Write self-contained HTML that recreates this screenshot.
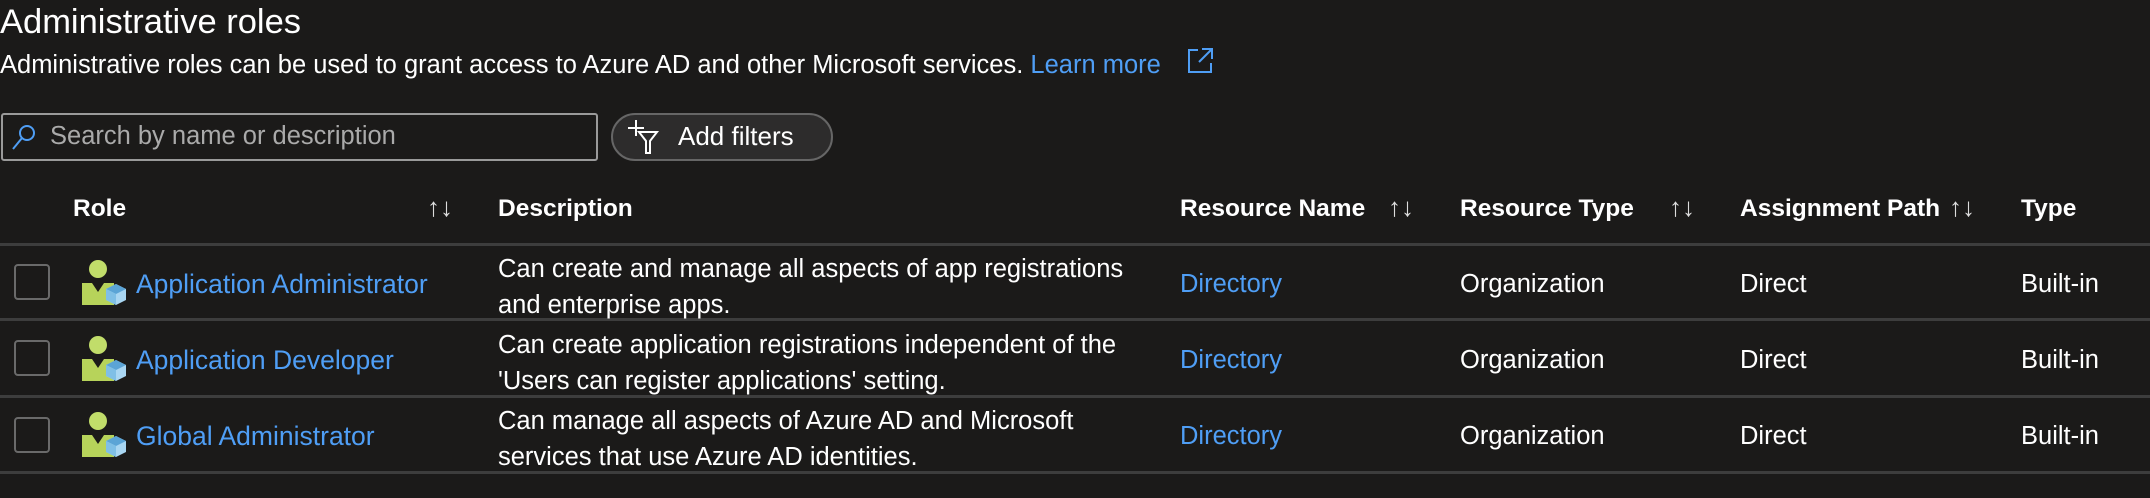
<!DOCTYPE html>
<html><head><meta charset="utf-8"><style>
*{margin:0;padding:0;box-sizing:border-box}
body{width:2150px;height:498px;background:#1b1a19;color:#fff;font-family:"Liberation Sans",sans-serif;position:relative;overflow:hidden}
.a{position:absolute;white-space:nowrap}
.lnk{color:#4f9ef5}
.h{font-weight:bold;font-size:24.5px;top:195px}
.sort{font-size:26px;top:192px;color:#ddd}
.line{position:absolute;left:0;width:2150px;height:3px;background:#3d3d3d}
.cb{position:absolute;left:14px;width:36px;height:36px;border:2px solid #6a6a6a;border-radius:4px}
.t{font-size:25.5px}
</style></head><body>
<div class="a" style="left:0;top:3px;font-size:34.5px">Administrative roles</div>
<div class="a" style="left:0;top:51px;font-size:25.5px">Administrative roles can be used to grant access to Azure AD and other Microsoft services. <span class="lnk">Learn more</span></div>
<svg class="a" style="left:1186px;top:46px" width="30" height="28" viewBox="0 0 30 28"><path d="M12 4H3v22h22v-9M16 3h10v10M26 3L13 16" fill="none" stroke="#4f9ef5" stroke-width="2"/></svg>
<div class="a" style="left:1px;top:113px;width:597px;height:48px;border:2px solid #9a9a9a;border-radius:3px"></div>
<svg class="a" style="left:10px;top:122px" width="28" height="30" viewBox="0 0 28 30"><circle cx="17" cy="11" r="7" fill="none" stroke="#4f9ef5" stroke-width="2"/><path d="M12 16L3 27" stroke="#4f9ef5" stroke-width="2"/></svg>
<div class="a" style="left:50px;top:122px;font-size:25.5px;color:#aaa">Search by name or description</div>
<div class="a" style="left:611px;top:113px;width:222px;height:48px;border:2px solid #666;border-radius:24px;background:#2d2c2c"></div>
<svg class="a" style="left:628px;top:118px" width="40" height="38" viewBox="0 0 40 38"><path d="M8 2v16M0 10h16" stroke="#fff" stroke-width="2"/><path d="M11 14h18l-7 9v12h-4V23z" fill="none" stroke="#fff" stroke-width="2"/></svg>
<div class="a" style="left:678px;top:121px;font-size:26px">Add filters</div>
<div class="a h" style="left:73px">Role</div>
<div class="a sort" style="left:427px">↑↓</div>
<div class="a h" style="left:498px">Description</div>
<div class="a h" style="left:1180px">Resource Name</div>
<div class="a sort" style="left:1388px">↑↓</div>
<div class="a h" style="left:1460px">Resource Type</div>
<div class="a sort" style="left:1669px">↑↓</div>
<div class="a h" style="left:1740px">Assignment Path</div>
<div class="a sort" style="left:1949px">↑↓</div>
<div class="a h" style="left:2021px">Type</div>
<div class="line" style="top:243px"></div>
<div class="line" style="top:318px"></div>
<div class="line" style="top:395px"></div>
<div class="line" style="top:471px"></div>

<div class="cb" style="top:264px"></div>
<div class="cb" style="top:340px"></div>
<div class="cb" style="top:417px"></div>

<svg class="a" style="left:82px;top:259px" width="44" height="46" viewBox="0 0 44 46"><circle cx="16" cy="10" r="9" fill="#c1dd6a"/><path d="M0 24h10l6 9 6-9h10v22H0z" fill="#b7d35a"/><path d="M24 30l10-5 10 5v11l-10 5-10-5z" fill="#a9d6f2"/><path d="M24 30l10-5 10 5-10 5z" fill="#5ba4d6"/><path d="M34 35v11l-10-5V30z" fill="#7fbfe6"/></svg>
<svg class="a" style="left:82px;top:335px" width="44" height="46" viewBox="0 0 44 46"><circle cx="16" cy="10" r="9" fill="#c1dd6a"/><path d="M0 24h10l6 9 6-9h10v22H0z" fill="#b7d35a"/><path d="M24 30l10-5 10 5v11l-10 5-10-5z" fill="#a9d6f2"/><path d="M24 30l10-5 10 5-10 5z" fill="#5ba4d6"/><path d="M34 35v11l-10-5V30z" fill="#7fbfe6"/></svg>
<svg class="a" style="left:82px;top:411px" width="44" height="46" viewBox="0 0 44 46"><circle cx="16" cy="10" r="9" fill="#c1dd6a"/><path d="M0 24h10l6 9 6-9h10v22H0z" fill="#b7d35a"/><path d="M24 30l10-5 10 5v11l-10 5-10-5z" fill="#a9d6f2"/><path d="M24 30l10-5 10 5-10 5z" fill="#5ba4d6"/><path d="M34 35v11l-10-5V30z" fill="#7fbfe6"/></svg>

<div class="a t lnk" style="left:136px;top:269px;font-size:26.5px">Application Administrator</div>
<div class="a t lnk" style="left:136px;top:345px;font-size:26.5px">Application Developer</div>
<div class="a t lnk" style="left:136px;top:421px;font-size:26.5px">Global Administrator</div>

<div class="a t" style="left:498px;top:251px;line-height:36px">Can create and manage all aspects of app registrations<br>and enterprise apps.</div>
<div class="a t" style="left:498px;top:327px;line-height:36px">Can create application registrations independent of the<br>'Users can register applications' setting.</div>
<div class="a t" style="left:498px;top:403px;line-height:36px">Can manage all aspects of Azure AD and Microsoft<br>services that use Azure AD identities.</div>

<div class="a t lnk" style="left:1180px;top:270px">Directory</div>
<div class="a t lnk" style="left:1180px;top:346px">Directory</div>
<div class="a t lnk" style="left:1180px;top:422px">Directory</div>
<div class="a t" style="left:1460px;top:270px">Organization</div>
<div class="a t" style="left:1460px;top:346px">Organization</div>
<div class="a t" style="left:1460px;top:422px">Organization</div>
<div class="a t" style="left:1740px;top:270px">Direct</div>
<div class="a t" style="left:1740px;top:346px">Direct</div>
<div class="a t" style="left:1740px;top:422px">Direct</div>
<div class="a t" style="left:2021px;top:270px">Built-in</div>
<div class="a t" style="left:2021px;top:346px">Built-in</div>
<div class="a t" style="left:2021px;top:422px">Built-in</div>
</body></html>
